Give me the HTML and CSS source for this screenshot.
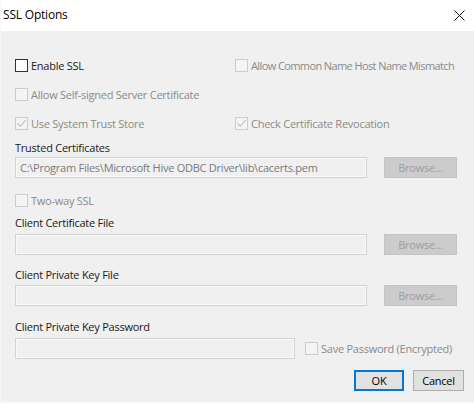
FILE: index.html
```html
<!DOCTYPE html>
<html>
<head>
<meta charset="utf-8">
<link rel="stylesheet" href="styles.css">
</head>
<body>
<div class="window">
  <div class="titlebar">
    <span class="title">SSL Options</span>
    <svg class="close" width="11" height="11" viewBox="0 0 11 11"><path d="M0.5 0.5 L10.5 10.5 M10.5 0.5 L0.5 10.5" stroke="#111" stroke-width="1"/></svg>
  </div>
  <div class="content">
    <div class="checks">
      <label class="check r1"><span class="box enabled"></span><span class="lbl">Enable SSL</span></label>
      <label class="check r1 disabled"><span class="box"></span><span class="lbl tight">Allow Common Name Host Name Mismatch</span></label>
      <label class="check r2 disabled"><span class="box"></span><span class="lbl">Allow Self-signed Server Certificate</span></label>
      <div class="r2"></div>
      <label class="check r3 disabled"><span class="box"><svg width="11" height="11" viewBox="0 0 11 11"><path d="M1.5 5.5 L4.2 8.3 L9.6 2.2" fill="none" stroke="#bdbdbd" stroke-width="1.1"/></svg></span><span class="lbl">Use System Trust Store</span></label>
      <label class="check r3 disabled"><span class="box"><svg width="11" height="11" viewBox="0 0 11 11"><path d="M1.5 5.5 L4.2 8.3 L9.6 2.2" fill="none" stroke="#bdbdbd" stroke-width="1.1"/></svg></span><span class="lbl">Check Certificate Revocation</span></label>
    </div>

    <div class="label l-trusted">Trusted Certificates</div>
    <div class="field-row fr-trusted">
      <div class="field">C:\Program Files\Microsoft Hive ODBC Driver\lib\cacerts.pem</div>
      <div class="btn browse">Browse...</div>
    </div>

    <label class="check disabled two-way"><span class="box"></span><span class="lbl">Two-way SSL</span></label>

    <div class="label l-client">Client Certificate File</div>
    <div class="field-row fr-client">
      <div class="field"></div>
      <div class="btn browse">Browse...</div>
    </div>

    <div class="label l-key">Client Private Key File</div>
    <div class="field-row fr-key">
      <div class="field"></div>
      <div class="btn browse">Browse...</div>
    </div>

    <div class="label l-pass">Client Private Key Password</div>
    <div class="field-row fr-pass">
      <div class="field pass"></div>
      <label class="check disabled save"><span class="box"></span><span class="lbl">Save Password (Encrypted)</span></label>
    </div>

    <div class="actions">
      <div class="btn action default">OK</div>
      <div class="btn action">Cancel</div>
    </div>
  </div>
</div>
</body>
</html>
```

FILE: styles.css
```css
html, body {
  margin: 0;
  padding: 0;
}
body {
  width: 474px;
  height: 404px;
  overflow: hidden;
  font-family: "Open Sans", "Noto Sans", sans-serif;
  font-size: 11px;
  letter-spacing: -0.25px;
  color: #1a1a1a;
  background: #fff;
}
.window {
  width: 474px;
  height: 404px;
  box-sizing: border-box;
  background: #f0f0f0;
  border-left: 1px solid #f7f7f7;
  border-bottom: 2px solid #fafafa;
  display: flex;
  flex-direction: column;
}
.titlebar {
  height: 31px;
  flex: none;
  background: #fff;
  display: flex;
  align-items: center;
  justify-content: space-between;
  padding: 0 9px 2px 2px;
  box-sizing: border-box;
}
.title {
  font-size: 12px;
  letter-spacing: -0.2px;
  color: #000;
}
.close {
  display: block;
  margin-top: 1px;
}
.content {
  padding: 24px 10px 0 14px;
  display: flex;
  flex-direction: column;
}
.checks {
  display: grid;
  grid-template-columns: 220px 1fr;
  grid-auto-rows: 20px;
  row-gap: 9px;
}
.check {
  display: flex;
  align-items: center;
  height: 20px;
}
.box {
  width: 13px;
  height: 13px;
  box-sizing: border-box;
  border: 1px solid #cccccc;
  background: #f4f4f4;
  flex: none;
  display: flex;
  align-items: center;
  justify-content: center;
}
.box.enabled {
  border-color: #333;
  background: #fcfcfc;
}
.lbl {
  margin-left: 3px;
  white-space: nowrap;
}
.lbl.tight {
  letter-spacing: -0.6px;
}
.disabled .lbl {
  color: #8a8a8a;
}
.label {
  height: 16px;
  line-height: 16px;
  white-space: nowrap;
}
.l-trusted { margin-top: 7px; }
.l-client { margin-top: 5px; }
.l-key { margin-top: 12px; }
.l-pass { margin-top: 13px; }
.two-way { margin-top: 12px; }
.field-row {
  display: flex;
  align-items: center;
  height: 21px;
}
.fr-trusted { margin-top: 1px; }
.fr-client { margin-top: 3px; }
.fr-key { margin-top: 2px; }
.fr-pass { margin-top: 3px; }
.field {
  width: 352px;
  height: 21px;
  box-sizing: border-box;
  border: 1px solid #d3d3d3;
  box-shadow: inset 0 0 0 1px #f9f9f9;
  background: #f0f0f0;
  color: #7a7a7a;
  padding: 0 4px;
  line-height: 19px;
  white-space: nowrap;
  overflow: hidden;
}
.field.pass {
  width: 280px;
}
.btn {
  box-sizing: border-box;
  height: 21px;
  display: flex;
  align-items: center;
  justify-content: center;
}
.browse {
  width: 73px;
  margin-left: 17px;
  background: #cccccc;
  border: 1px solid #c4c4c4;
  color: #9d9d9d;
}
.save {
  margin-left: 10px;
}
.actions {
  display: flex;
  justify-content: flex-end;
  gap: 9px;
  margin-top: 11px;
}
.action {
  width: 51px;
  height: 21px;
  background: #e1e1e1;
  border: 1px solid #adadad;
  color: #000;
}
.action.default {
  width: 50px;
  border: 2px solid #0078d7;
}
```
